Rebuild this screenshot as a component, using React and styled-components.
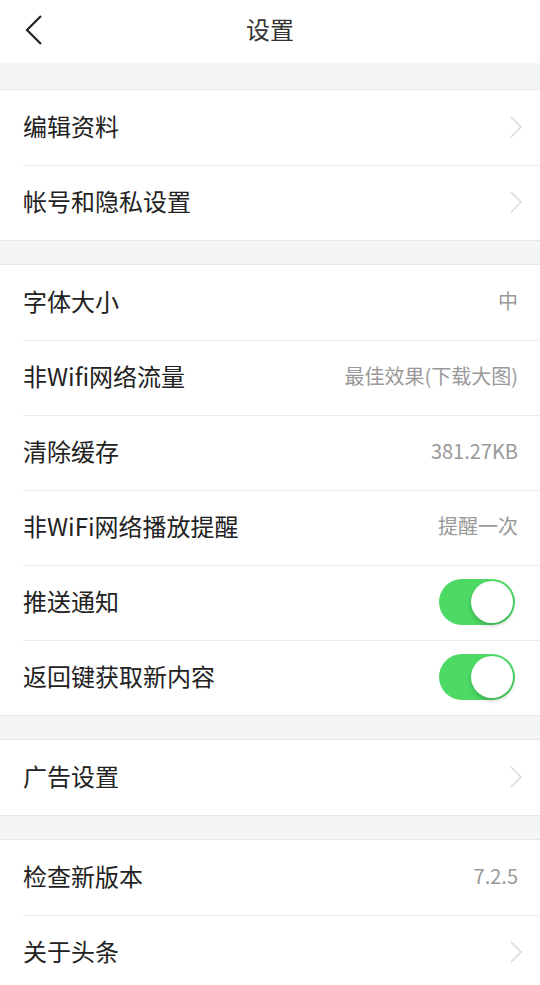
import React, { useState } from 'react'
import styled, { createGlobalStyle } from 'styled-components'

const GlobalStyle = createGlobalStyle`
  body {
    margin: 0;
    background: #f4f5f6;
    font-family: "Noto Sans CJK SC", "Noto Sans", sans-serif;
  }
`

const Page = styled.div`
  width: 540px;
  min-height: 985px;
  background: #f4f5f6;
`

const Header = styled.div`
  height: 63px;
  background: #fff;
  display: flex;
  align-items: center;
  justify-content: center;
  position: relative;
`

const BackButton = styled.button`
  position: absolute;
  left: 22px;
  top: 14px;
  width: 30px;
  height: 34px;
  border: none;
  background: none;
  padding: 0;
  cursor: pointer;
`

const Title = styled.h1`
  margin: -6px 0 0;
  font-size: 24px;
  font-weight: 400;
  color: #333;
`

const Gap = styled.div`
  height: ${props => props.h}px;
`

const Group = styled.div`
  background: #fff;
  border-top: 1px solid #e6e6e6;
  border-bottom: 1px solid #e6e6e6;
`

const Row = styled.div`
  height: 75px;
  margin-left: 23px;
  padding-right: 22px;
  display: flex;
  align-items: center;
  justify-content: space-between;
  border-top: ${props => props.first ? 'none' : '1px solid #ececec'};
  box-sizing: border-box;
`

const Label = styled.span`
  font-size: 24px;
  color: #222;
  margin-top: -5px;
`

const Value = styled.span`
  font-size: 20px;
  color: #999;
  margin-top: -5px;
`

const Toggle = styled.button`
  width: 76px;
  height: 46px;
  border-radius: 23px;
  border: none;
  padding: 0;
  margin-right: 3px;
  margin-top: -2px;
  background: ${props => props.on ? '#4cd964' : '#e5e5e5'};
  display: flex;
  align-items: center;
  justify-content: ${props => props.on ? 'flex-end' : 'flex-start'};
  cursor: pointer;
`

const Knob = styled.span`
  width: 42px;
  height: 42px;
  border-radius: 50%;
  background: #fff;
  margin: 0 2px;
  box-shadow: 0 3px 4px rgba(0, 0, 0, 0.18);
`

const ChevronIcon = styled.svg`
  margin-right: -4px;
  margin-top: -2px;
`

const Chevron = () => (
  <ChevronIcon width="12" height="22" viewBox="0 0 12 22">
    <path d="M1 1 L11 11 L1 21" fill="none" stroke="#d6d6d6" strokeWidth="1.3" />
  </ChevronIcon>
)

const groups = [
  [
    { label: '编辑资料', arrow: true },
    { label: '帐号和隐私设置', arrow: true }
  ],
  [
    { label: '字体大小', value: '中' },
    { label: '非Wifi网络流量', value: '最佳效果(下载大图)' },
    { label: '清除缓存', value: '381.27KB' },
    { label: '非WiFi网络播放提醒', value: '提醒一次' },
    { label: '推送通知', toggle: 'push' },
    { label: '返回键获取新内容', toggle: 'back' }
  ],
  [
    { label: '广告设置', arrow: true }
  ],
  [
    { label: '检查新版本', value: '7.2.5' },
    { label: '关于头条', arrow: true }
  ]
]

const gaps = [26, 23, 23, 23]

const App = () => {
  const [toggles, setToggles] = useState({ push: true, back: true })

  return (
    <Page>
      <GlobalStyle />
      <Header>
        <BackButton>
          <svg width="30" height="34" viewBox="0 0 30 34">
            <path d="M19 2 L5 16 L19 30" fill="none" stroke="#222" strokeWidth="2.2" />
          </svg>
        </BackButton>
        <Title>设置</Title>
      </Header>
      {groups.map((items, gi) => (
        <React.Fragment key={gi}>
          <Gap h={gaps[gi]} />
          <Group>
            {items.map((item, i) => (
              <Row key={item.label} first={i === 0}>
                <Label>{item.label}</Label>
                {item.value && <Value>{item.value}</Value>}
                {item.arrow && <Chevron />}
                {item.toggle && (
                  <Toggle
                    on={toggles[item.toggle]}
                    onClick={() => setToggles(t => ({ ...t, [item.toggle]: !t[item.toggle] }))}
                  >
                    <Knob />
                  </Toggle>
                )}
              </Row>
            ))}
          </Group>
        </React.Fragment>
      ))}
    </Page>
  )
}

export default App
